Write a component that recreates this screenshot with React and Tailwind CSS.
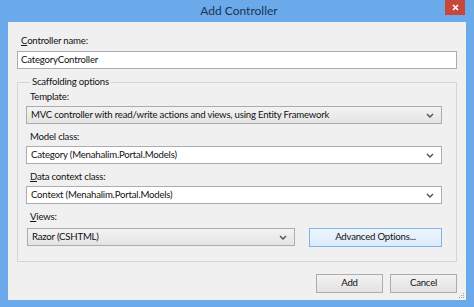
import React from "react";

function Chevron() {
  return (
    <svg width="8" height="5" viewBox="0 0 8 5" className="shrink-0">
      <path d="M1 1 L4 4 L7 1" fill="none" stroke="#4d4d4d" strokeWidth="1.4" />
    </svg>
  );
}

function Combo({ text, gray, className = "" }) {
  return (
    <div
      className={
        "h-[18px] flex items-center pl-[4px] pr-[7px] border " +
        (gray ? "bg-gradient-to-b from-[#f3f3f3] to-[#e4e4e4] border-[#acacac] " : "bg-white border-[#abadb3] ") +
        className
      }
    >
      <span className="flex-1 truncate">{text}</span>
      <Chevron />
    </div>
  );
}

function Label({ children, className = "" }) {
  return <div className={"h-[12px] leading-[12px] pl-[4px] " + className}>{children}</div>;
}

function Button({ children, className = "" }) {
  return (
    <button
      className={
        "h-[19px] flex items-center justify-center border border-[#acacac] bg-gradient-to-b from-[#f2f2f2] to-[#e3e3e3] " +
        className
      }
    >
      {children}
    </button>
  );
}

export default function App() {
  return (
    <div
      className="w-[474px] h-[307px] bg-[#6aa9ea] flex flex-col px-[8px] pb-[7px] text-[9.6px] tracking-[-0.2px] text-[#111]"
      style={{ fontFamily: 'Lato, "Noto Sans", sans-serif' }}
    >
      {/* title bar */}
      <div className="h-[22px] grid grid-cols-[1fr_auto_1fr] items-start">
        <div />
        <div className="text-[12px] tracking-normal leading-[22px] text-[#1d3550] pl-[4px]">Add Controller</div>
        <div className="flex justify-end pr-[1px]">
          <div className="w-[20px] h-[15px] bg-[#c8473b] flex items-center justify-center">
            <svg width="7" height="7" viewBox="0 0 7 7">
              <path d="M1 1 L6 6 M6 1 L1 6" stroke="white" strokeWidth="1.6" />
            </svg>
          </div>
        </div>
      </div>

      {/* client area */}
      <div className="flex-1 bg-[#f0f0f0] flex flex-col px-[9px] pt-[13px] relative">
        <div className="h-[12px] leading-[12px] pl-[4px]">
          <span className="underline">C</span>ontroller name:
        </div>
        <div className="mt-[4px] h-[18px] bg-white border border-[#abadb3] flex items-center pl-[3px]">
          CategoryController
        </div>

        <fieldset className="mt-[6px] border border-[#d5d5d5] pl-[8px] pr-[14px] pb-[14px] min-w-0">
          <legend className="ml-[4px] px-[2px] leading-[14px]">Scaffolding options</legend>
          <Label className="mt-[2px]">Template:</Label>
          <Combo gray className="mt-[3px]" text="MVC controller with read/write actions and views, using Entity Framework" />
          <Label className="mt-[7px]">Model class:</Label>
          <Combo className="mt-[3px]" text="Category (Menahalim.Portal.Models)" />
          <Label className="mt-[7px]">
            <span className="underline">D</span>ata context class:
          </Label>
          <Combo className="mt-[3px]" text="Context (Menahalim.Portal.Models)" />
          <Label className="mt-[7px]">
            <span className="underline">V</span>iews:
          </Label>
          <div className="mt-[5px] flex items-start">
            <Combo gray className="w-[268px] ml-[1px]" text="Razor (CSHTML)" />
            <button className="ml-auto w-[133px] h-[19px] border border-[#7eb4ea] bg-gradient-to-b from-[#edf5fd] to-[#dcebfb] flex items-center justify-center">
              Advanced Options...
            </button>
          </div>
        </fieldset>

        <div className="mt-[12px] flex justify-end gap-[7px]">
          <Button className="w-[67px]">Add</Button>
          <Button className="w-[67px]">Cancel</Button>
        </div>

        {/* resize grip */}
        <svg width="6" height="6" viewBox="0 0 6 6" className="absolute right-[1px] bottom-[1px]">
          <rect x="4" y="0" width="1" height="1" fill="#a0a0a0" />
          <rect x="2" y="2" width="1" height="1" fill="#a0a0a0" />
          <rect x="4" y="2" width="1" height="1" fill="#a0a0a0" />
          <rect x="0" y="4" width="1" height="1" fill="#a0a0a0" />
          <rect x="2" y="4" width="1" height="1" fill="#a0a0a0" />
          <rect x="4" y="4" width="1" height="1" fill="#a0a0a0" />
        </svg>
      </div>
    </div>
  );
}
